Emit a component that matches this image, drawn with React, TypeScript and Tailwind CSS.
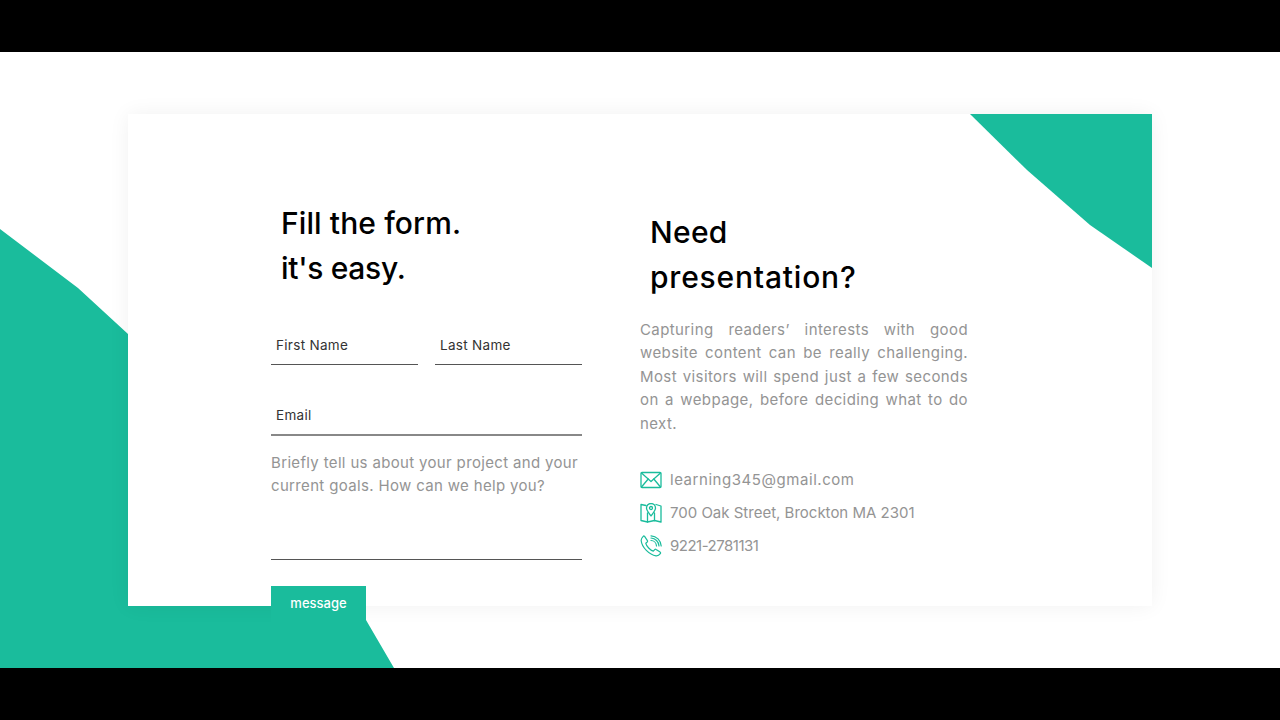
import React from "react";

const font = { fontFamily: '"Inter", "Liberation Sans", sans-serif' };

const MailIcon = () => (
  <svg className="-mt-[2px]" width="22" height="18" viewBox="0 0 22 18" fill="none" stroke="#1abc9c" strokeWidth="1.3" strokeLinejoin="round" strokeLinecap="round">
    <rect x="1" y="1.500" width="20" height="15" rx="1" />
    <path d="M1.500 2 11 10.500 20.500 2" />
    <path d="M1.500 16 8.200 8M20.500 16 13.800 8" />
  </svg>
);

const MapIcon = () => (
  <svg className="-mt-[2px]" width="22" height="20" viewBox="0 0 22 20" fill="none" stroke="#1abc9c" strokeWidth="1.3" strokeLinejoin="round" strokeLinecap="round">
    <path d="M6 2.500 1 1.500v16L7.500 19l7-1.500 6.500 1.500V3L16 1.500" />
    <path d="M7.500 10v9M14.500 10v7.500" />
    <path d="M11 13c-2.200-3.200-4.500-5.500-4.500-8a4.500 4.500 0 0 1 9 0c0 2.500-2.300 4.800-4.500 8Z" />
    <circle cx="11" cy="5" r="1.500" />
  </svg>
);

const PhoneIcon = () => (
  <svg className="-mt-[2px]" width="22" height="22" viewBox="0 0 22 22" fill="none" stroke="#1abc9c" strokeWidth="1.2" strokeLinejoin="round" strokeLinecap="round">
    <path d="M4.600 1.400 7.400 5.600c.3.500.2 1-.2 1.400L5.800 8.300c.7 3 4.400 6.900 7.500 7.800l1.400-1.500c.4-.4 1-.5 1.400-.2l4 2.700c.5.400.6 1 .2 1.500-1 1.400-2.400 2.400-4.300 2.200C9.400 20 1.800 12.300 1.200 5.800 1 4 2 2.500 3.200 1.300c.4-.4 1-.3 1.400.1Z" />
    <path d="M11 5.500c2.900.1 5.300 2.500 5.500 5.500" />
    <path d="M11 3c4.300.2 7.800 3.700 8 8" />
    <path d="M11 .8c5.500.2 9.900 4.700 10.200 10.200" />
  </svg>
);

const inputClass =
  "w-full h-10 pl-[5px] bg-transparent outline-none text-[13.500px] tracking-[0.3px] text-[#333] placeholder:text-[#333]";

export default function App() {
  return (
    <div className="h-screen flex flex-col bg-black overflow-hidden" style={font}>
      <div className="h-[52px] shrink-0 bg-black" />
      <main className="relative flex-1 bg-white pt-[62px] overflow-hidden">
        {/* background shape, mostly hidden by the card */}
        <svg className="absolute left-0 bottom-0" width="394" height="439" viewBox="0 0 394 439">
          <path d="M0 0 78 59 128 105V300H366V391L394 439H0Z" fill="#1abc9c" />
        </svg>

        <div className="relative mx-auto w-[1024px] h-[492px] bg-white shadow-[0_0_20px_rgba(0,0,0,0.06)] flex pl-[143px] gap-[58px]">
          <svg className="absolute top-0 right-0" width="182" height="154" viewBox="0 0 182 154">
            <path d="M0 0H182V154L120 111 57 56Z" fill="#1abc9c" />
          </svg>

          <form className="w-[311px] shrink-0 pt-[87px]">
            <h2 className="pl-[10px] text-[30px] leading-[45px] font-medium text-black">
              <span className="tracking-[0.1px]">Fill the form.</span>
              <br />
              <span className="tracking-[-0.3px]">it's easy.</span>
            </h2>
            <div className="mt-[34px] flex gap-[17px]">
              <input className={`${inputClass} border-b border-[#555]`} placeholder="First Name" />
              <input className={`${inputClass} border-b border-[#555]`} placeholder="Last Name" />
            </div>
            <input className={`${inputClass} mt-[31px] border-b-2 border-[#888]`} placeholder="Email" />
            <textarea
              className="mt-[15px] block w-full h-[109px] resize-none bg-transparent outline-none border-b border-[#555] text-[15px] leading-[23.400px] tracking-[0.34px] placeholder:text-[#949494]"
              placeholder="Briefly tell us about your project and your current goals. How can we help you?"
            />
            <button type="button" className="mt-[26px] w-[95px] h-[36px] bg-[#1abc9c] text-white text-[13px] font-medium">
              message
            </button>
          </form>

          <div className="w-[328px] shrink-0 pt-[96px]">
            <h2 className="pl-[10px] text-[30px] leading-[45px] font-medium text-black">
              <span className="tracking-[0.3px]">Need</span>
              <br />
              <span className="tracking-[0.8px]">presentation?</span>
            </h2>
            <p className="mt-[18px] text-[15px] leading-[23.400px] tracking-[0.4px] text-[#949494] text-justify">
              Capturing readers’ interests with good website content can be really challenging. Most visitors will spend
              just a few seconds on a webpage, before deciding what to do next.
            </p>
            <ul className="mt-[29px] text-[15px] text-[#949494]">
              <li className="h-[33px] flex items-center gap-2">
                <MailIcon />
                <span className="tracking-[0.55px]">learning345@gmail.com</span>
              </li>
              <li className="h-[33px] flex items-center gap-2">
                <MapIcon />
                <span>700 Oak Street, Brockton MA 2301</span>
              </li>
              <li className="h-[33px] flex items-center gap-2">
                <PhoneIcon />
                <span className="tracking-[-0.5px]">9221-2781131</span>
              </li>
            </ul>
          </div>
        </div>
      </main>
      <div className="h-[52px] shrink-0 bg-black" />
    </div>
  );
}
